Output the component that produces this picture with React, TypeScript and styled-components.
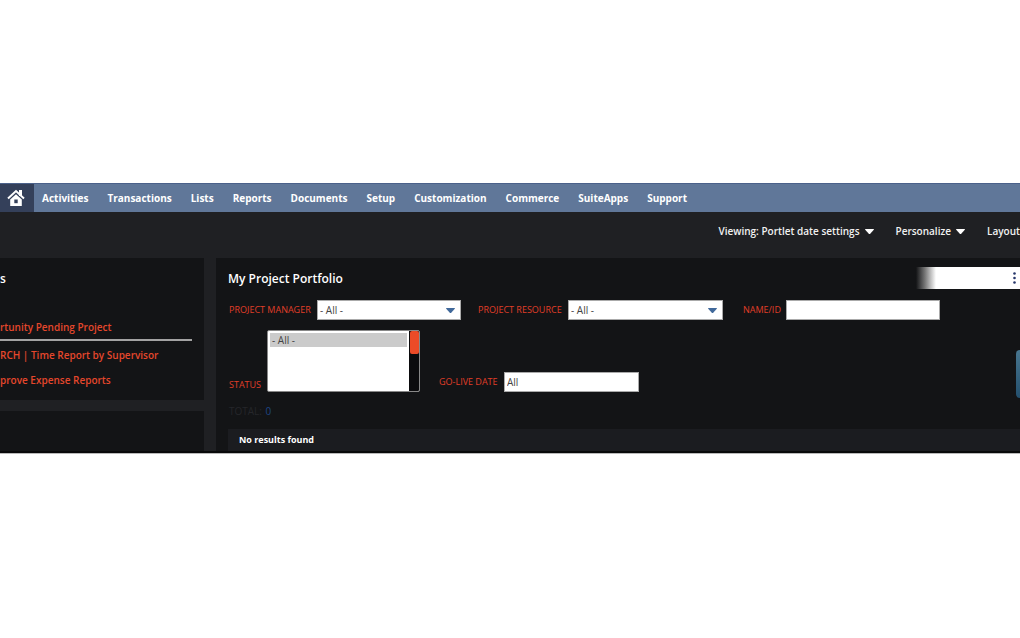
import React from 'react';
import styled, { createGlobalStyle } from 'styled-components';

const GlobalStyle = createGlobalStyle`
  * { box-sizing: border-box; }
  body {
    margin: 0;
    background: #fff;
    font-family: "Open Sans", "Noto Sans", sans-serif;
    font-size: 10px;
  }
  button, input, select { font: inherit; }
`;

const Page = styled.div`
  min-height: 100vh;
  display: flex;
  flex-direction: column;
  justify-content: center;
  padding-bottom: 2px;
  overflow: hidden;
`;

const Dashboard = styled.div`
  background: #1f2023;
  border-bottom: 2px solid #08090a;
  box-shadow: 0 1px 0 #b9b9b9;
`;

const NavBar = styled.nav`
  height: 29px;
  display: flex;
  align-items: stretch;
  background: #607799;
  border-top: 1px solid #4b618a;
`;

const HomeLink = styled.a`
  width: 34px;
  display: flex;
  align-items: center;
  justify-content: center;
  padding-right: 2px;
  background: #34405a;
`;

const NavList = styled.div`
  display: flex;
  align-items: center;
  gap: 19px;
  padding-left: 8px;
`;

const NavLink = styled.a`
  color: #fff;
  font-weight: 700;
  font-size: 10px;
  line-height: 16px;
  text-decoration: none;
  white-space: nowrap;
`;

const Toolbar = styled.div`
  display: flex;
  justify-content: flex-end;
  align-items: center;
  gap: 22px;
  height: 46px;
  padding-bottom: 8px;
`;

const ToolButton = styled.button`
  display: flex;
  align-items: center;
  gap: 5px;
  padding: 0;
  border: 0;
  background: none;
  color: #f1f1f1;
  font-weight: 600;
  line-height: 16px;
  white-space: nowrap;
`;

const Columns = styled.div`
  display: flex;
  gap: 12px;
`;

const SideColumn = styled.aside`
  flex: 0 0 20%;
  display: flex;
  flex-direction: column;
  gap: 11px;
`;

const Panel = styled.section`
  background: #131416;
`;

const LinksPanel = styled(Panel)`
  height: 142px;
  padding-top: 13px;
`;

const EmptyPanel = styled(Panel)`
  flex: 1;
`;

const PanelTitle = styled.h2`
  margin: 0;
  color: #fff;
  font-size: 12px;
  font-weight: 600;
  line-height: 16px;
`;

const ReportList = styled.div`
  display: flex;
  flex-direction: column;
  padding: 32px 12px 0 0;
`;

const ReportLink = styled.a<{ $divided?: boolean }>`
  height: ${p => (p.$divided ? 22 : 25)}px;
  margin-bottom: ${p => (p.$divided ? 6 : 0)}px;
  border-bottom: ${p => (p.$divided ? '2px solid #a3a3a3' : '0')};
  color: #e5472c;
  font-size: 10px;
  font-weight: 600;
  line-height: 16px;
  text-decoration: none;
  white-space: nowrap;
`;

const Portfolio = styled(Panel)`
  position: relative;
  flex: 1;
  min-width: 0;
  padding: 13px 0 0 12px;
`;

const PortletMenu = styled.button`
  position: absolute;
  top: 9px;
  right: 0;
  width: 104px;
  height: 22px;
  display: flex;
  align-items: center;
  justify-content: flex-end;
  padding: 0 4px 0 0;
  border: 0;
  background: linear-gradient(90deg, #131416, #777 9px, #fff 20px);
`;

const SideTab = styled.button`
  position: absolute;
  top: 92px;
  right: 0;
  width: 4px;
  height: 48px;
  padding: 0;
  border: 0;
  border-radius: 4px 0 0 4px;
  background: linear-gradient(#48768f, #24506e);
`;

const Filters = styled.div`
  display: flex;
  align-items: center;
  padding: 13px 0 10px 1px;
`;

const StatusFilters = styled(Filters)`
  align-items: flex-end;
  padding: 0 0 0 1px;
`;

const Field = styled.div<{ $label: number; $gap?: number }>`
  display: grid;
  grid-template-columns: ${p => p.$label}px auto;
  align-items: center;
  margin-right: ${p => p.$gap ?? 0}px;
`;

const StatusField = styled(Field)`
  align-items: end;
`;

const Label = styled.label`
  color: #e03e28;
  font-size: 9px;
  line-height: 14px;
  white-space: nowrap;
`;

const SelectBox = styled.div<{ $width: number }>`
  display: flex;
  align-items: center;
  width: ${p => p.$width}px;
  height: 20px;
  padding-right: 5px;
  border: 1px solid #aaa;
  background: #fff;
`;

const Select = styled.select`
  appearance: none;
  flex: 1;
  min-width: 0;
  padding: 0 2px;
  border: 0;
  background: none;
  color: #444;
  font-size: 10px;
  line-height: 16px;
`;

const TextInput = styled.input<{ $width: number }>`
  width: ${p => p.$width}px;
  height: 20px;
  padding: 0 2px;
  border: 1px solid #aaa;
  background: #fff;
  color: #444;
  font-size: 10px;
`;

const ListFrame = styled.div`
  display: flex;
  width: 153px;
  height: 62px;
  border: 1px solid #888;
  border-radius: 2px;
  background: #fff;
  overflow: hidden;
`;

const ListBox = styled.select`
  flex: 1;
  min-width: 0;
  padding: 2px;
  border: 0;
  outline: 0;
  background: #fff;
  font-size: 10px;
  line-height: 14px;
  scrollbar-width: none;

  option {
    height: 14px;
    min-height: 14px;
    padding: 0 2px;
    color: #444;
  }
  option:checked {
    background: #cbcbcb linear-gradient(#cbcbcb, #cbcbcb);
    color: #444;
  }
`;

const ScrollTrack = styled.div`
  width: 10px;
  padding-left: 1px;
  background: #0b0b0d;
`;

const ScrollThumb = styled.div`
  height: 23px;
  border-radius: 2px;
  background: #ec4b27;
`;

const Total = styled.div`
  padding: 11px 0 0 1px;
  color: #25262a;
  font-size: 10px;
  line-height: 16px;
`;

const Count = styled.span`
  margin-left: 1px;
  color: #1d4585;
`;

const Results = styled.div`
  height: 22px;
  margin-top: 10px;
  padding-left: 11px;
  background: #1b1c20;
  color: #fff;
  font-size: 9px;
  font-weight: 700;
  line-height: 22px;
`;

const HomeIcon = () => (
  <svg width="18" height="18" viewBox="0 0 18 18" aria-hidden="true">
    <path d="M12 1h3v6h-3z" fill="#fff" />
    <path d="M1 9.5 9 2l8 7.5" fill="none" stroke="#fff" strokeWidth="2" />
    <path d="M9 5.2 3.2 10.5V17h11.6v-6.5z" fill="#fff" />
    <path d="M7.3 10.5h3.4v3.7H7.3z" fill="#34405a" />
  </svg>
);

const Caret = ({ color = '#fff' }: { color?: string }) => (
  <svg width="9" height="5" viewBox="0 0 9 5" aria-hidden="true">
    <path d="M0 .5Q0 0 .5 0h8q.5 0 .5.5L5 5H4z" fill={color} />
  </svg>
);

const Dots = () => (
  <svg width="3" height="12" viewBox="0 0 3 12" aria-hidden="true">
    <circle cx="1.5" cy="1.5" r="1.3" fill="#26366b" />
    <circle cx="1.5" cy="6" r="1.3" fill="#26366b" />
    <circle cx="1.5" cy="10.500" r="1.3" fill="#26366b" />
  </svg>
);

const navItems = [
  'Activities', 'Transactions', 'Lists', 'Reports', 'Documents',
  'Setup', 'Customization', 'Commerce', 'SuiteApps', 'Support',
];

export default function App() {
  return (
    <Page>
      <GlobalStyle />
      <Dashboard>
        <NavBar>
          <HomeLink href="#" aria-label="Home"><HomeIcon /></HomeLink>
          <NavList>
            {navItems.map(item => <NavLink key={item} href="#">{item}</NavLink>)}
          </NavList>
        </NavBar>
        <Toolbar>
          <ToolButton>Viewing: Portlet date settings <Caret /></ToolButton>
          <ToolButton>Personalize <Caret /></ToolButton>
          <ToolButton>Layout</ToolButton>
        </Toolbar>
        <Columns>
          <SideColumn>
            <LinksPanel>
              <PanelTitle>s</PanelTitle>
              <ReportList>
                <ReportLink href="#" $divided>rtunity Pending Project</ReportLink>
                <ReportLink href="#">RCH | Time Report by Supervisor</ReportLink>
                <ReportLink href="#">prove Expense Reports</ReportLink>
              </ReportList>
            </LinksPanel>
            <EmptyPanel />
          </SideColumn>
          <Portfolio>
            <PanelTitle>My Project Portfolio</PanelTitle>
            <PortletMenu aria-label="Portlet menu"><Dots /></PortletMenu>
            <Filters>
              <Field $label={88} $gap={17}>
                <Label htmlFor="manager">PROJECT MANAGER</Label>
                <SelectBox $width={144}>
                  <Select id="manager"><option>- All -</option></Select>
                  <Caret color="#41699b" />
                </SelectBox>
              </Field>
              <Field $label={90} $gap={20}>
                <Label htmlFor="resource">PROJECT RESOURCE</Label>
                <SelectBox $width={155}>
                  <Select id="resource"><option>- All -</option></Select>
                  <Caret color="#41699b" />
                </SelectBox>
              </Field>
              <Field $label={43}>
                <Label htmlFor="name">NAME/ID</Label>
                <TextInput id="name" $width={154} />
              </Field>
            </Filters>
            <StatusFilters>
              <StatusField $label={38} $gap={19}>
                <Label htmlFor="status">STATUS</Label>
                <ListFrame>
                  <ListBox id="status" multiple size={4} defaultValue={['all']}>
                    <option value="all">- All -</option>
                  </ListBox>
                  <ScrollTrack><ScrollThumb /></ScrollTrack>
                </ListFrame>
              </StatusField>
              <Field $label={65}>
                <Label htmlFor="golive">GO-LIVE DATE</Label>
                <TextInput id="golive" $width={135} defaultValue="All" />
              </Field>
            </StatusFilters>
            <Total>TOTAL: <Count>0</Count></Total>
            <Results>No results found</Results>
            <SideTab aria-label="Open side panel" />
          </Portfolio>
        </Columns>
      </Dashboard>
    </Page>
  );
}
